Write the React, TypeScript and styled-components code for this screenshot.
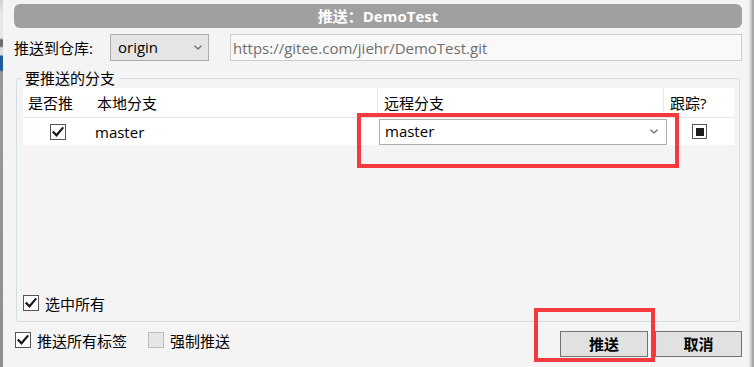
import React from "react";
import styled, { createGlobalStyle } from "styled-components";

const Global = createGlobalStyle`
  html, body { margin: 0; padding: 0; background: #f4f4f4; }
  body { font-family: "Open Sans", "Noto Sans CJK SC", sans-serif; font-size: 15px; color: #000; }
  * { box-sizing: border-box; }
`;

const Screen = styled.div`
  position: relative;
  width: 754px;
  height: 367px;
  display: flex;
  overflow: hidden;
  background: #f4f4f4;
`;

const LeftEdge = styled.div`
  width: 3px;
  flex: none;
  background: linear-gradient(
    to bottom,
    #d0d0d0 0px,
    #e6e6e6 12px,
    #e6e6e6 38px,
    #6b6b6b 40px,
    #6b6b6b 46px,
    #dcdcdc 48px,
    #dcdcdc 55px,
    #1f5c9c 56px,
    #1f5c9c 70px,
    #9a9a9a 72px,
    #8e8e8e 100%
  );
`;

const RightEdge = styled.div`
  width: 5px;
  flex: none;
  border-left: 1px solid #e2e2e2;
  background: linear-gradient(to right, #d8d8d8 0px, #d8d8d8 1px, #a8a8a8 2px, #a8a8a8 100%);
`;

const Main = styled.div`
  flex: 1;
  display: flex;
  flex-direction: column;
  padding: 4px 7px 0 11px;
  min-width: 0;
`;

const TitleBar = styled.div`
  height: 24px;
  border-radius: 6px;
  background: #a0a0a0;
  color: #fff;
  font-weight: 700;
  font-size: 15px;
  line-height: 24px;
  text-align: center;
`;

const RepoRow = styled.div`
  margin-top: 6px;
  height: 27px;
  display: flex;
  align-items: center;
`;

const RepoLabel = styled.span`
  width: 96px;
  flex: none;
  white-space: nowrap;
`;

const Combo = styled.div<{ $width: number; $height: number; $bg: string; $padL: number; $padR: number }>`
  width: ${(p) => p.$width}px;
  height: ${(p) => p.$height}px;
  flex: none;
  display: flex;
  align-items: center;
  justify-content: space-between;
  padding: 0 ${(p) => p.$padR}px 0 ${(p) => p.$padL}px;
  background: ${(p) => p.$bg};
  border: 1px solid #adadad;
`;

const ComboText = styled.span`
  line-height: 1;
`;

const TextField = styled.div`
  margin-left: 21px;
  flex: 1;
  height: 27px;
  display: flex;
  align-items: center;
  padding-left: 2px;
  background: #f9f9f9;
  border: 1px solid #cdcdcd;
  color: #6f6f6f;
  white-space: nowrap;
  overflow: hidden;
`;

const Group = styled.fieldset`
  margin: 8px 2px 0 2px;
  padding: 1px 5px 10px 6px;
  border: 1px solid #d3dde4;
  border-radius: 3px;
  min-width: 0;
`;

const Legend = styled.legend`
  padding: 0 4px;
  margin-left: -2px;
  line-height: 18px;
  font-size: 15px;
`;

const ListArea = styled.div`
  height: 200px;
`;

const GridRow = styled.div<{ $header?: boolean }>`
  display: grid;
  grid-template-columns: 68px 287px 286px 70px;
  height: ${(p) => (p.$header ? 30 : 27)}px;
  background: #fff;
  border-bottom: ${(p) => (p.$header ? "1px solid #e6e6e6" : "none")};
`;

const Cell = styled.div<{ $divider?: boolean; $pad?: number }>`
  display: flex;
  align-items: center;
  padding-left: ${(p) => p.$pad ?? 0}px;
  border-right: ${(p) => (p.$divider ? "1px solid #e6e6e6" : "none")};
  white-space: nowrap;
  overflow: visible;
`;

const SelectAllRow = styled.div`
  margin-top: 7px;
  height: 16px;
  display: flex;
  align-items: center;
  gap: 6px;
`;

const BottomRow = styled.div`
  margin-top: 9px;
  display: flex;
  align-items: flex-start;
`;

const CheckItem = styled.label<{ $ml: number }>`
  margin-left: ${(p) => p.$ml}px;
  margin-top: 1px;
  height: 16px;
  display: flex;
  align-items: center;
  gap: 6px;
  white-space: nowrap;
`;

const Box = styled.span<{ $disabled?: boolean; $size?: number }>`
  width: ${(p) => p.$size ?? 16}px;
  height: ${(p) => p.$size ?? 16}px;
  flex: none;
  display: inline-flex;
  align-items: center;
  justify-content: center;
  background: ${(p) => (p.$disabled ? "#e6e6e6" : "#fff")};
  border: 1px solid ${(p) => (p.$disabled ? "#bcbcbc" : "#555")};
`;

const FilledSquare = styled.span`
  width: 8px;
  height: 8px;
  background: #1c1c1c;
`;

const Buttons = styled.div`
  margin-left: auto;
  display: flex;
  gap: 7px;
`;

const Button = styled.button<{ $width: number }>`
  width: ${(p) => p.$width}px;
  height: 26px;
  background: #e1e1e1;
  border: 1px solid #707070;
  font-family: "Open Sans", "Noto Sans CJK SC", sans-serif;
  font-size: 15px;
  font-weight: 700;
  color: #000;
  padding: 0;
  line-height: 1;
`;

const Highlight = styled.div<{ $x: number; $y: number; $w: number; $h: number }>`
  position: absolute;
  left: ${(p) => p.$x}px;
  top: ${(p) => p.$y}px;
  width: ${(p) => p.$w}px;
  height: ${(p) => p.$h}px;
  border: 4px solid #f43a3c;
  pointer-events: none;
`;

const Check = () => (
  <svg width="14" height="14" viewBox="0 0 14 14">
    <path d="M2.5 7.2 L5.5 10.3 L11.5 3.2" fill="none" stroke="#1a1a1a" strokeWidth="2.2" strokeLinecap="square" />
  </svg>
);

const Chevron = () => (
  <svg width="8" height="5" viewBox="0 0 8 5">
    <path d="M0.5 0.8 L4 4 L7.5 0.8" fill="none" stroke="#666" strokeWidth="1.2" />
  </svg>
);

const CheckBox = ({ checked, disabled }: { checked?: boolean; disabled?: boolean }) => (
  <Box $disabled={disabled}>{checked ? <Check /> : null}</Box>
);

export default function App() {
  return (
    <>
      <Global />
      <Screen>
        <LeftEdge />
        <Main>
          <TitleBar>推送：DemoTest</TitleBar>
          <RepoRow>
            <RepoLabel>推送到仓库:</RepoLabel>
            <Combo $width={99} $height={27} $bg="#e5e5e5" $padL={7} $padR={6}>
              <ComboText>origin</ComboText>
              <Chevron />
            </Combo>
            <TextField>https://gitee.com/jiehr/DemoTest.git</TextField>
          </RepoRow>
          <Group>
            <Legend>要推送的分支</Legend>
            <ListArea>
              <GridRow $header>
                <Cell $pad={5}>是否推</Cell>
                <Cell $pad={6} $divider>本地分支</Cell>
                <Cell $pad={6} $divider>远程分支</Cell>
                <Cell $pad={6}>跟踪?</Cell>
              </GridRow>
              <GridRow>
                <Cell $pad={27}>
                  <CheckBox checked />
                </Cell>
                <Cell $pad={4}>master</Cell>
                <Cell $pad={1}>
                  <Combo $width={288} $height={26} $bg="#fff" $padL={5} $padR={8}>
                    <ComboText>master</ComboText>
                    <Chevron />
                  </Combo>
                </Cell>
                <Cell $pad={28}>
                  <Box $size={15}>
                    <FilledSquare />
                  </Box>
                </Cell>
              </GridRow>
            </ListArea>
            <SelectAllRow>
              <CheckBox checked />
              <span>选中所有</span>
            </SelectAllRow>
          </Group>
          <BottomRow>
            <CheckItem $ml={1}>
              <CheckBox checked />
              <span>推送所有标签</span>
            </CheckItem>
            <CheckItem $ml={21}>
              <CheckBox disabled />
              <span>强制推送</span>
            </CheckItem>
            <Buttons>
              <Button $width={88}>推送</Button>
              <Button $width={87}>取消</Button>
            </Buttons>
          </BottomRow>
        </Main>
        <RightEdge />
        <Highlight $x={357} $y={113} $w={322} $h={55} />
        <Highlight $x={534} $y={308} $w={121} $h={54} />
      </Screen>
    </>
  );
}
